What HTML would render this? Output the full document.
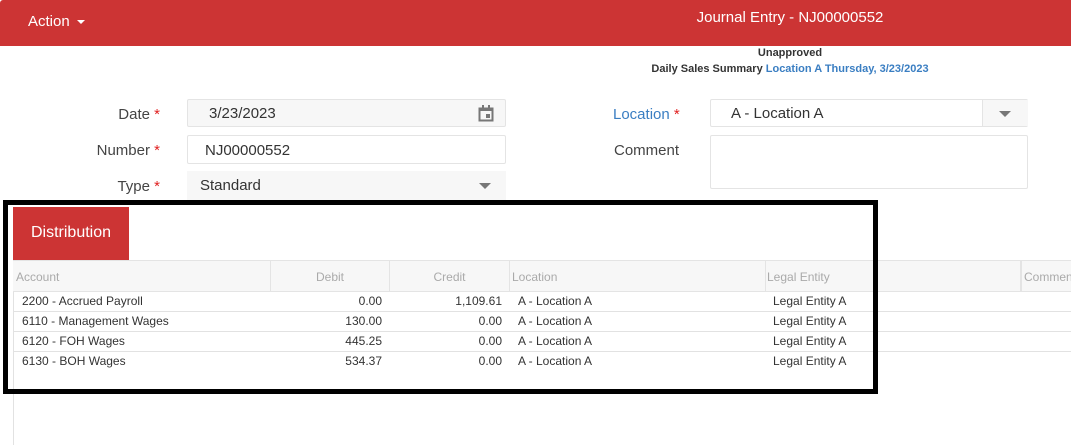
<!DOCTYPE html>
<html><head><style>
body{margin:0;width:1071px;height:445px;background:#fff;font-family:"Liberation Sans",Arial,sans-serif;position:relative;overflow:hidden;color:#333}
.a{position:absolute}
.hdr{left:0;top:0;width:1071px;height:46px;background:#cc3434;border-radius:3px 0 0 0}
.lbl{font-size:15px;color:#444;text-align:right;width:160px}
.lbl b{color:#e02020;font-weight:normal}
.inp{border:1px solid #e4e4e4;border-radius:2px;box-sizing:border-box;font-size:15px;color:#333}
.th{top:260px;height:32px;line-height:34px;font-size:12px;color:#aaa;box-sizing:border-box;border-right:1px solid #e4e4e4;white-space:nowrap;overflow:hidden}
.td{font-size:12px;color:#333;height:20px;line-height:18px;white-space:nowrap}
.rl{left:13px;width:1058px;height:1px;background:#e2e2e2}
</style></head><body>
<div class="a hdr"></div>
<div class="a" style="left:28px;top:13px;font-size:15px;color:#fff">Action <span style="display:inline-block;width:0;height:0;border-left:4px solid transparent;border-right:4px solid transparent;border-top:4px solid #fff;vertical-align:middle;margin-left:3px"></span></div>
<div class="a" style="left:590px;width:400px;text-align:center;top:9px;font-size:15px;color:#fff">Journal Entry - NJ00000552</div>
<div class="a" style="left:590px;width:400px;text-align:center;top:47px;font-size:11px;font-weight:bold;color:#333">Unapproved</div>
<div class="a" style="left:590px;width:400px;text-align:center;top:63px;font-size:11px;font-weight:bold;color:#333">Daily Sales Summary <span style="color:#3a7ec2">Location A Thursday, 3/23/2023</span></div>

<div class="a lbl" style="left:0;top:106px">Date <b>*</b></div>
<div class="a lbl" style="left:0;top:142px">Number <b>*</b></div>
<div class="a lbl" style="left:0;top:178px">Type <b>*</b></div>
<div class="a inp" style="left:187px;top:99px;width:319px;height:28px;background:#f7f7f7;padding:5px 0 0 21px">3/23/2023
<svg class="a" style="left:290px;top:5px" width="16" height="17" viewBox="0 0 16 17"><rect x="1.5" y="3.5" width="13" height="12" fill="none" stroke="#777" stroke-width="2"/><rect x="1" y="3" width="14" height="3" fill="#777"/><rect x="4" y="0" width="2" height="4" fill="#777"/><rect x="10" y="0" width="2" height="4" fill="#777"/><rect x="8" y="9" width="4" height="4" fill="#777"/></svg></div>
<div class="a inp" style="left:187px;top:135px;width:319px;height:29px;background:#fff;padding:6px 0 0 17px">NJ00000552</div>
<div class="a" style="left:187px;top:171px;width:319px;height:29px;background:#f7f7f7;font-size:15px;padding:6px 0 0 13px;box-sizing:border-box">Standard
<span class="a" style="left:292px;top:12px;width:0;height:0;border-left:6px solid transparent;border-right:6px solid transparent;border-top:6px solid #777"></span></div>

<div class="a" style="left:613px;top:106px;font-size:15px;color:#3a7ec2">Location <b style="color:#e02020;font-weight:normal">*</b></div>
<div class="a" style="left:614px;top:142px;font-size:15px;color:#444">Comment</div>
<div class="a inp" style="left:710px;top:99px;width:318px;height:28px;padding:5px 0 0 20px">A - Location A
<div class="a" style="left:271px;top:0;width:45px;height:26px;background:#f7f7f7;border-left:1px solid #e4e4e4"><span class="a" style="left:16px;top:11px;width:0;height:0;border-left:6px solid transparent;border-right:6px solid transparent;border-top:6px solid #777"></span></div></div>
<div class="a inp" style="left:710px;top:135px;width:318px;height:54px"></div>

<div class="a" style="left:13px;top:260px;width:1px;height:185px;background:#e2e2e2"></div>
<div class="a" style="left:13px;top:207px;width:116px;height:53px;background:#cc3434;color:#fff;font-size:16px;line-height:52px;text-align:center">Distribution</div>
<div class="a" style="left:13px;top:260px;width:1058px;height:32px;background:#f7f7f7;border-top:1px solid #e4e4e4;border-bottom:1px solid #e4e4e4;box-sizing:border-box"></div>
<div class="a th" style="left:13px;width:258px;padding-left:3px">Account</div>
<div class="a th" style="left:271px;width:119px;text-align:center">Debit</div>
<div class="a th" style="left:390px;width:120px;text-align:center">Credit</div>
<div class="a th" style="left:510px;width:256px;padding-left:2px">Location</div>
<div class="a th" style="left:766px;width:255px;padding-left:1px">Legal Entity</div>
<div class="a th" style="left:1021px;width:60px;padding-left:2px;border-right:none;border-left:1px solid #e4e4e4">Comment</div>

<div class="a rl" style="top:311px"></div><div class="a rl" style="top:331px"></div><div class="a rl" style="top:351px"></div>

<div class="a" style="left:0;top:292px">
<div class="a td" style="left:22px;top:0">2200 - Accrued Payroll</div>
<div class="a td" style="left:22px;top:20px">6110 - Management Wages</div>
<div class="a td" style="left:22px;top:40px">6120 - FOH Wages</div>
<div class="a td" style="left:22px;top:60px">6130 - BOH Wages</div>
<div class="a td" style="left:280px;width:102px;text-align:right;top:0">0.00</div>
<div class="a td" style="left:280px;width:102px;text-align:right;top:20px">130.00</div>
<div class="a td" style="left:280px;width:102px;text-align:right;top:40px">445.25</div>
<div class="a td" style="left:280px;width:102px;text-align:right;top:60px">534.37</div>
<div class="a td" style="left:400px;width:102px;text-align:right;top:0">1,109.61</div>
<div class="a td" style="left:400px;width:102px;text-align:right;top:20px">0.00</div>
<div class="a td" style="left:400px;width:102px;text-align:right;top:40px">0.00</div>
<div class="a td" style="left:400px;width:102px;text-align:right;top:60px">0.00</div>
<div class="a td" style="left:518px;top:0">A - Location A</div>
<div class="a td" style="left:518px;top:20px">A - Location A</div>
<div class="a td" style="left:518px;top:40px">A - Location A</div>
<div class="a td" style="left:518px;top:60px">A - Location A</div>
<div class="a td" style="left:773px;top:0">Legal Entity A</div>
<div class="a td" style="left:773px;top:20px">Legal Entity A</div>
<div class="a td" style="left:773px;top:40px">Legal Entity A</div>
<div class="a td" style="left:773px;top:60px">Legal Entity A</div>
</div>

<div class="a" style="left:3px;top:200px;width:875px;height:194px;border:5px solid #000;box-sizing:border-box"></div>
</body></html>
